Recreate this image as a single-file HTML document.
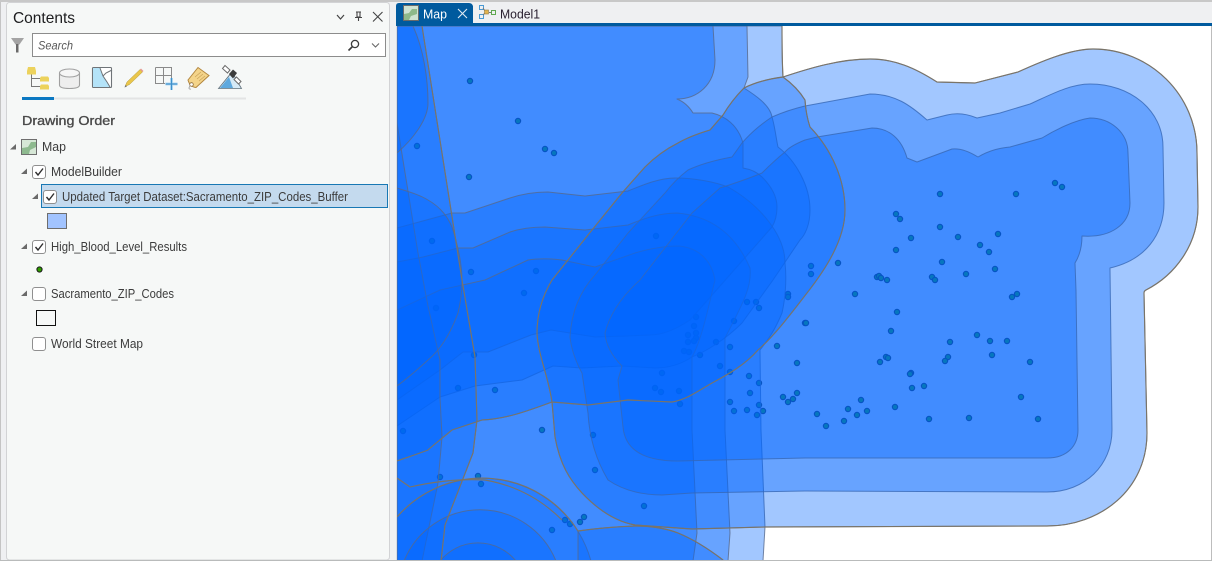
<!DOCTYPE html>
<html><head><meta charset="utf-8"><title>Contents</title>
<style>
html,body{margin:0;padding:0;background:#fff;overflow:hidden;width:1212px;height:561px}
svg{display:block;position:absolute;left:0;top:0}
text{font-family:"Liberation Sans",sans-serif}
#dots circle{r:2.7px}
</style></head><body>
<svg width="1212" height="561" viewBox="0 0 1212 561" xmlns="http://www.w3.org/2000/svg">
<defs><clipPath id="mapc"><rect x="397" y="26" width="814" height="534"/></clipPath></defs>
<rect width="1212" height="561" fill="#eff0f2"/>
<rect x="0" y="0" width="1" height="561" fill="#c4c4c4"/>
<rect width="1212" height="2" fill="#c8c8c8"/>
<rect x="6.500" y="2.500" width="383" height="557.500" rx="3" fill="#f6f8f7" stroke="#d2d3d5"/>

<!-- map -->
<rect x="397" y="26" width="814" height="534" fill="#fff"/>
<g clip-path="url(#mapc)">
<g fill="#1aa800" stroke="#1a1a1a" stroke-width="1" id="dots">
<circle cx="470" cy="81" r="2.7"/><circle cx="518" cy="121" r="2.7"/><circle cx="545" cy="149" r="2.7"/><circle cx="554" cy="153" r="2.7"/><circle cx="417" cy="146" r="2.7"/><circle cx="469" cy="177" r="2.7"/><circle cx="432" cy="241" r="2.7"/><circle cx="471" cy="272" r="2.7"/><circle cx="536" cy="271" r="2.7"/><circle cx="656" cy="236" r="2.7"/>
<circle cx="524" cy="293" r="2.7"/><circle cx="436" cy="308" r="2.7"/><circle cx="474" cy="355" r="2.7"/><circle cx="458" cy="388" r="2.7"/><circle cx="495" cy="390" r="2.7"/><circle cx="403" cy="431" r="2.7"/><circle cx="542" cy="430" r="2.7"/><circle cx="593" cy="435" r="2.7"/><circle cx="595" cy="470" r="2.7"/><circle cx="644" cy="506" r="2.7"/><circle cx="440" cy="477" r="2.7"/><circle cx="478" cy="476" r="2.7"/><circle cx="481" cy="484" r="2.7"/><circle cx="552" cy="530" r="2.7"/><circle cx="565" cy="520" r="2.7"/><circle cx="570" cy="524" r="2.7"/><circle cx="580" cy="522" r="2.7"/><circle cx="584" cy="517" r="2.7"/>
<circle cx="788" cy="294" r="2.7"/><circle cx="788" cy="297" r="2.7"/><circle cx="747" cy="302" r="2.7"/><circle cx="756" cy="302" r="2.7"/><circle cx="759" cy="308" r="2.7"/><circle cx="734" cy="321" r="2.7"/><circle cx="696" cy="317" r="2.7"/><circle cx="694" cy="326" r="2.7"/><circle cx="696" cy="333" r="2.7"/><circle cx="688" cy="335" r="2.7"/><circle cx="696" cy="338" r="2.7"/><circle cx="694" cy="341" r="2.7"/><circle cx="688" cy="342" r="2.7"/><circle cx="716" cy="342" r="2.7"/><circle cx="730" cy="347" r="2.7"/><circle cx="684" cy="351" r="2.7"/><circle cx="689" cy="352" r="2.7"/><circle cx="700" cy="355" r="2.7"/><circle cx="777" cy="346" r="2.7"/><circle cx="797" cy="363" r="2.7"/><circle cx="720" cy="366" r="2.7"/><circle cx="730" cy="372" r="2.7"/><circle cx="662" cy="373" r="2.7"/><circle cx="749" cy="376" r="2.7"/><circle cx="759" cy="383" r="2.7"/><circle cx="655" cy="388" r="2.7"/><circle cx="661" cy="392" r="2.7"/><circle cx="679" cy="391" r="2.7"/><circle cx="750" cy="393" r="2.7"/><circle cx="680" cy="404" r="2.7"/><circle cx="730" cy="402" r="2.7"/><circle cx="734" cy="411" r="2.7"/><circle cx="747" cy="410" r="2.7"/><circle cx="759" cy="405" r="2.7"/><circle cx="757" cy="415" r="2.7"/><circle cx="763" cy="411" r="2.7"/><circle cx="783" cy="397" r="2.7"/><circle cx="788" cy="402" r="2.7"/><circle cx="793" cy="399" r="2.7"/><circle cx="797" cy="393" r="2.7"/><circle cx="805" cy="323" r="2.7"/>
<circle cx="940" cy="194" r="2.7"/><circle cx="1016" cy="194" r="2.7"/><circle cx="1055" cy="183" r="2.7"/><circle cx="1062" cy="187" r="2.7"/><circle cx="896" cy="214" r="2.7"/><circle cx="900" cy="219" r="2.7"/><circle cx="940" cy="227" r="2.7"/><circle cx="958" cy="237" r="2.7"/><circle cx="998" cy="234" r="2.7"/><circle cx="911" cy="238" r="2.7"/><circle cx="980" cy="245" r="2.7"/><circle cx="989" cy="252" r="2.7"/><circle cx="896" cy="250" r="2.7"/><circle cx="942" cy="262" r="2.7"/><circle cx="995" cy="269" r="2.7"/><circle cx="966" cy="274" r="2.7"/><circle cx="838" cy="263" r="2.7"/><circle cx="811" cy="266" r="2.7"/><circle cx="811" cy="274" r="2.7"/><circle cx="877" cy="277" r="2.7"/><circle cx="879" cy="276" r="2.7"/><circle cx="881" cy="278" r="2.7"/><circle cx="887" cy="280" r="2.7"/><circle cx="932" cy="277" r="2.7"/><circle cx="935" cy="280" r="2.7"/>
<circle cx="855" cy="294" r="2.7"/><circle cx="1017" cy="294" r="2.7"/><circle cx="1012" cy="297" r="2.7"/><circle cx="897" cy="312" r="2.7"/><circle cx="806" cy="323" r="2.7"/><circle cx="891" cy="331" r="2.7"/><circle cx="977" cy="335" r="2.7"/><circle cx="990" cy="341" r="2.7"/><circle cx="1007" cy="341" r="2.7"/><circle cx="950" cy="342" r="2.7"/><circle cx="992" cy="355" r="2.7"/><circle cx="948" cy="357" r="2.7"/><circle cx="945" cy="361" r="2.7"/><circle cx="886" cy="357" r="2.7"/><circle cx="888" cy="358" r="2.7"/><circle cx="880" cy="362" r="2.7"/><circle cx="1030" cy="362" r="2.7"/><circle cx="911" cy="373" r="2.7"/><circle cx="910" cy="374" r="2.7"/><circle cx="924" cy="386" r="2.7"/><circle cx="912" cy="388" r="2.7"/><circle cx="1021" cy="397" r="2.7"/><circle cx="861" cy="400" r="2.7"/><circle cx="848" cy="409" r="2.7"/><circle cx="867" cy="411" r="2.7"/><circle cx="895" cy="407" r="2.7"/><circle cx="817" cy="414" r="2.7"/><circle cx="857" cy="415" r="2.7"/><circle cx="844" cy="421" r="2.7"/><circle cx="826" cy="426" r="2.7"/><circle cx="929" cy="419" r="2.7"/><circle cx="969" cy="418" r="2.7"/><circle cx="1038" cy="419" r="2.7"/>
</g>
<g fill="#0066ff" fill-opacity=".365" stroke-linejoin="round">
<g stroke="#56698c" stroke-width="1" stroke-opacity=".8">
<!-- North zip -->
<path d="M397 26H782L782 26Q782 60 783 77Q797 87 805 100Q806 115 810 127C832 150 845 180 845 210C845 240 825 270 807 293C790 315 775 335 758 350C745 365 727 375 712 383C695 393 685 400 672 402L628 400L588 405L552 402C525 412 505 419 482 420L452 430C440 440 430 448 428 450C415 455 405 458 397 461Z"/>
<path d="M397 26H747L748 77L744 88C755 95 770 105 772 117C775 127 776 138 778 147C795 160 810 185 810 210C810 225 805 235 800 240L773 280L742 323C725 340 705 352 692 357C680 365 668 368 655 368L622 366L582 368L553 366L522 380L475 386L440 397L397 426Z"/>
<path d="M397 26H713L715 60C715 85 697 99 677 99Q687 103 693 113H712C725 116 738 125 743 143V168C755 170 760 175 762 177C772 187 777 197 777 207C777 215 775 222 772 227L728 277L690 320C675 330 662 335 650 335L628 336L595 337L551 330L531 335L488 352H463L440 370L397 400Z"/>
<!-- South zip -->
<path d="M397 228L452 213H465L510 198C525 193 540 192 548 192L585 196L628 191C645 184 660 178 675 178C695 178 715 182 728 187C760 205 785 235 785 263C787 280 785 300 782 313C775 330 768 340 760 350L761 430L765 527L763 561H397Z"/>
<path d="M397 262L423 257L458 248H473L510 232C525 227 540 227 545 227L585 230L628 225C645 218 660 213 677 213C710 216 735 233 750 268C752 285 745 300 725 338L725 430L730 533L728 561H397Z"/>
<path d="M397 310L440 290L485 280L528 260C540 258 555 259 562 260L595 267L635 253C655 247 670 246 679 246C700 248 712 262 715 280C710 300 702 340 692 357L692 430L697 533L693 561H397Z"/>
<!-- West zip -->
<path d="M397 26H422L462 280L475 357L477 420L473 453L445 525L441 561H397Z"/>
<path d="M397 123L418 253L428 306L440 360V397L442 437L438 483L422 561H397Z"/>
<path d="M397 26H413C424 50 428 80 428 103C428 120 412 140 397 153Z"/>
<path d="M397 188C410 192 420 195 428 200C442 208 448 218 452 227C458 245 462 265 462 280C462 295 460 305 458 313C450 335 440 350 428 360C415 372 405 380 397 386Z"/>
<!-- South-west circles -->
<path d="M397 517A113 113 0 0 1 591 561H397Z"/>
<path d="M404 561A82 82 0 0 1 556 561Z"/>
<path d="M440 561A49 49 0 0 1 516 561Z"/>
<path d="M578 531Q606 527 635 526C650 526 665 528 678 533C695 540 710 550 723 560V561H578Z"/>
<!-- East zip mid + inner -->
<path d="M805 106Q788 110 772 117Q755 128 742 143L732 157Q705 162 688 170Q675 180 665 193L628 233L595 275Q572 300 570 337Q572 355 582 373L588 413Q590 450 608 480Q630 495 662 495L692 493L805 491L1047 492C1085 492 1112 465 1112 430L1110 268C1145 260 1164 235 1164 203L1163 147C1163 110 1130 84 1090 84C1070 84 1050 95 1030 104L1000 113L977 118C965 113 955 113 947 115L927 120C910 105 895 94 870 94L805 106Z"/>
<path d="M805 140Q790 146 785 152Q775 160 762 173Q745 180 720 188L692 213L640 280Q612 305 605 333Q606 350 622 366L618 380L623 427Q626 461 678 461L805 458L1047 458C1068 458 1078 445 1078 430L1076 290L1075 263C1080 255 1082 245 1082 236C1110 238 1130 225 1130 203L1128 153C1128 132 1110 118 1090 118C1075 120 1055 130 1042 138L1010 147C1000 148 990 150 978 157C970 152 960 148 952 149L917 162L907 158C902 140 890 128 872 128L817 137L805 140Z"/>
<!-- East zip outer -->
<path d="M783 77Q760 80 744 88Q732 100 723 115L710 130Q690 136 678 143Q660 152 645 167L622 193L592 230L552 280Q537 305 537 333C538 355 548 375 552 402L555 437C560 465 570 480 582 493C600 512 618 522 635 525L692 529L765 527L1047 526C1100 526 1147 490 1147 433L1144 293Q1144 291 1146 290C1175 275 1198 245 1198 207L1197 153C1197 95 1150 49 1093 49C1070 49 1040 62 1018 72L975 83L937 82C915 68 895 59 870 59C840 59 810 68 783 77Z"/>
</g>
</g>
<!-- strong grey-brown outlines on top -->
<g fill="none" stroke="#7a7468" stroke-width="1.150" stroke-linejoin="round">
<path d="M782 26Q782 60 783 77Q797 87 805 100Q806 115 810 127C832 150 845 180 845 210C845 240 825 270 807 293C790 315 775 335 758 350C745 365 727 375 712 383C695 393 685 400 672 402L628 400L588 405L552 402C525 412 505 419 482 420L452 430C440 440 430 448 428 450C415 455 405 458 397 461"/>
<path d="M422 26L462 280L475 357L477 420L473 453L445 525L441 561"/>
<path d="M397 517A113 113 0 0 1 578 531"/>
<path d="M397 478L410 487Q450 478 485 480Q530 488 562 520"/>
<path d="M578 531Q606 527 635 526C650 526 665 528 678 533C695 540 710 550 723 560"/>
<path d="M783 77Q760 80 744 88Q732 100 723 115L710 130Q690 136 678 143Q660 152 645 167L622 193L592 230L552 280Q537 305 537 333C538 355 548 375 552 402L555 437C560 465 570 480 582 493C600 512 618 522 635 525L692 529L765 527L1047 526C1100 526 1147 490 1147 433L1144 293Q1144 291 1146 290C1175 275 1198 245 1198 207L1197 153C1197 95 1150 49 1093 49C1070 49 1040 62 1018 72L975 83L937 82C915 68 895 59 870 59C840 59 810 68 783 77"/>
</g>
</g>
<rect x="396" y="26" width="1" height="535" fill="#dadbdd"/>
<rect x="1211" y="26" width="1" height="535" fill="#bdbdbd"/>
<rect y="560" width="1212" height="1" fill="#b9bbbb"/>

<!-- tab strip -->
<rect x="396" y="23" width="816" height="3" fill="#005a9e"/>
<path d="M396 24V6Q396 3 399 3H469Q472 3 473 6V24Z" fill="#005a9e"/>
<rect x="403.500" y="5.500" width="15" height="15" fill="#cfe3d2" stroke="#6a6a6a"/>
<path d="M404 20V14L409 13L412 9H417V14L411 16L409 20Z" fill="#8eb98a"/>
<text x="423" y="18.500" font-size="13" fill="#ffffff" textLength="24" lengthAdjust="spacingAndGlyphs">Map</text>
<path d="M458 9L467 18M467 9L458 18" stroke="#dfeaf4" stroke-width="1.100" fill="none"/>
<g fill="none" stroke-width="1">
<rect x="479.500" y="5.500" width="4" height="4" stroke="#4a9ad4"/>
<rect x="479.500" y="14.500" width="4" height="4" stroke="#4a9ad4"/>
<rect x="491.500" y="10.500" width="4" height="4" stroke="#5fa84f"/>
<path d="M483 8L485 11M483 15L485 13M489 12.500H491" stroke="#777"/>
</g>
<rect x="484.500" y="10" width="4" height="4" fill="#e3b34e" stroke="#8f7a4a" stroke-width=".6"/>
<text x="500" y="18.500" font-size="13" fill="#2a2030" textLength="40" lengthAdjust="spacingAndGlyphs">Model1</text>

<!-- header -->
<text x="13" y="23" font-size="16" fill="#1d1d1f" textLength="62" lengthAdjust="spacingAndGlyphs">Contents</text>
<path d="M337 15L340.500 19L344 15" fill="none" stroke="#444" stroke-width="1.200"/>
<path d="M356 12H361M357 12V17H360V12M355 17.500H362M358.500 18V21" fill="none" stroke="#444" stroke-width="1.100"/>
<path d="M373 12L382.500 21.500M382.500 12L373 21.500" fill="none" stroke="#444" stroke-width="1.100"/>
<!-- filter -->
<path d="M11 38H24L19.500 44.500H15.500Z" fill="#a4a4a4"/>
<path d="M16 44V52.500H18.500V44Z" fill="#6a6a6a"/>
<!-- search -->
<rect x="32.500" y="33.500" width="353" height="23" fill="#fff" stroke="#8c8c8c"/>
<text x="38" y="49.500" font-size="12" font-style="italic" fill="#595959" textLength="35" lengthAdjust="spacingAndGlyphs">Search</text>
<circle cx="355" cy="44" r="3.600" fill="none" stroke="#3c3c3c" stroke-width="1.300"/>
<path d="M352.500 46.500L348.500 50.500" stroke="#3c3c3c" stroke-width="1.600"/>
<path d="M372 43.500L375.500 47L379 43.500" fill="none" stroke="#666" stroke-width="1.100"/>

<!-- toolbar icons -->
<!-- tree -->
<path d="M31.500 74V86.500H41M31.500 78.500H41" fill="none" stroke="#777" stroke-width="1"/>
<path d="M27 71L28 67H35L36 71V74.500H27Z" fill="#ecd25c"/>
<path d="M40 81V78L41 76.500H48L49 78V81.500H40Z" fill="#ecd25c"/>
<path d="M40 89V86L41 84.500H48L49 86V89.500H40Z" fill="#ecd25c"/>
<!-- database -->
<path d="M59.500 73V85C59.500 87.500 64 88.500 69.500 88.500C75 88.500 79.500 87.500 79.500 85V73" fill="#eeeeee" stroke="#a0a0a0" stroke-width="1.100"/>
<ellipse cx="69.500" cy="73" rx="10" ry="4" fill="#f6f6f6" stroke="#a0a0a0" stroke-width="1.100"/>
<!-- map -->
<rect x="92.500" y="67.500" width="19" height="20" rx="1" fill="#fff" stroke="#6f7478" stroke-width="1.100"/>
<path d="M93 68H100L103 76L107 82L110 87H93Z" fill="#b4e3f8"/>
<path d="M100 68L103 76L107 82L110 87M103 76L106 73L112 70" fill="none" stroke="#6f7478"/>
<!-- pencil -->
<path d="M125 86.500L127 82L140 69.500L142.500 72L129.500 84.500Z" fill="#eac64a" stroke="#b39a3c" stroke-width=".5"/>
<path d="M140 69.500L141 68.500L143.500 71L142.500 72Z" fill="#e89a96"/>
<path d="M124.500 87.500L125.500 85L127 86.500Z" fill="#777"/>
<!-- grid plus -->
<path d="M155.500 67.500H171.500V78M155.500 67.500V83.500H165M155.500 75.500H171.500M163.500 67.500V83.500" fill="none" stroke="#8a8a8a" stroke-width="1"/>
<path d="M171.500 78V90M165.500 84H177.500" stroke="#b7ddf4" stroke-width="3"/>
<path d="M171.500 78V90M165.500 84H177.500" stroke="#3d8fca" stroke-width="1.200"/>
<!-- tag -->
<path d="M188 80L198 67.500L209 75.500L196 87.500Q190 87 188 80Z" fill="#f4d48a" stroke="#b3873f" stroke-width="1"/>
<path d="M195 77L201 72M197 79L203 74M199 81L205 76" stroke="#c9a25a" stroke-width=".7"/>
<circle cx="191.500" cy="84.500" r="1.800" fill="#fff" stroke="#8b6b3c" stroke-width=".8"/>
<path d="M190 86C188.500 88 188.500 89.500 191 89" fill="none" stroke="#999" stroke-width=".8"/>
<!-- satellite -->
<path d="M218.500 88.500L232 72L241.500 88.500Z" fill="#d6eaf6" stroke="#5f6f7a" stroke-width=".8"/>
<path d="M220 88L229 77L233 88Z" fill="#5fa9de"/>
<path d="M225 65.500L230 70L227.500 73L222.500 68.500Z" fill="#fff" stroke="#6a6a6a"/>
<path d="M236.500 77L241 81.500L238.500 84L234 79.500Z" fill="#fff" stroke="#6a6a6a"/>
<path d="M229 74L233 69.500L237 73L233 78.500Z" fill="#3c3c3c"/>

<rect x="22" y="97.500" width="224" height="2" fill="#e3e4e4"/>
<rect x="22" y="97" width="32" height="3" fill="#0b78c2"/>

<!-- tree text -->
<text x="22" y="125" font-size="13" fill="#4a4a4a" stroke="#4a4a4a" stroke-width=".35" textLength="93" lengthAdjust="spacingAndGlyphs">Drawing Order</text>

<g fill="#6a6a6a"><path d="M10 149.500L16 144V149.500Z"/><path d="M21 174L27 168.500V174Z"/><path d="M32 199L38 193.500V199Z"/><path d="M21 249L27 243.500V249Z"/><path d="M21 296L27 290.500V296Z"/></g>

<rect x="21.500" y="139.500" width="15" height="15" fill="#d6e7d6" stroke="#6e6e6e"/>
<path d="M22 154V148L28 147L31 142H36V147L30 150L29 154Z" fill="#8eba8f"/>
<text x="42" y="151" font-size="12.500" fill="#3c3c3c" textLength="24" lengthAdjust="spacingAndGlyphs">Map</text>

<rect x="32.500" y="165.500" width="13" height="13" rx="2.500" fill="#fff" stroke="#8f8f8f"/>
<path d="M35.500 172L38 175L43 168.500" fill="none" stroke="#2e2e2e" stroke-width="1.400"/>
<text x="51" y="176" font-size="12.500" fill="#3c3c3c" textLength="71" lengthAdjust="spacingAndGlyphs">ModelBuilder</text>

<rect x="41.500" y="184.500" width="346" height="23" fill="#c4daee" stroke="#1878b4"/>
<rect x="43.500" y="190.500" width="13" height="13" rx="2.500" fill="#fff" stroke="#8f8f8f"/>
<path d="M46.500 197L49 200L54 193.500" fill="none" stroke="#2e2e2e" stroke-width="1.400"/>
<text x="62" y="201" font-size="12.500" fill="#3c3c3c" textLength="286" lengthAdjust="spacingAndGlyphs">Updated Target Dataset:Sacramento_ZIP_Codes_Buffer</text>

<rect x="47.500" y="213.500" width="19" height="15" fill="#a2c4ff" stroke="#6e6e6e"/>

<rect x="32.500" y="240.500" width="13" height="13" rx="2.500" fill="#fff" stroke="#8f8f8f"/>
<path d="M35.500 247L38 250L43 243.500" fill="none" stroke="#2e2e2e" stroke-width="1.400"/>
<text x="51" y="251" font-size="12.500" fill="#3c3c3c" textLength="136" lengthAdjust="spacingAndGlyphs">High_Blood_Level_Results</text>

<circle cx="39.500" cy="269.500" r="2.600" fill="#2f9c00" stroke="#1a1a1a"/>

<rect x="32.500" y="287.500" width="13" height="13" rx="2.500" fill="#fff" stroke="#8f8f8f"/>
<text x="51" y="298" font-size="12.500" fill="#3c3c3c" textLength="123" lengthAdjust="spacingAndGlyphs">Sacramento_ZIP_Codes</text>

<rect x="36.500" y="310.500" width="19" height="15" fill="none" stroke="#111" stroke-width="1"/>

<rect x="32.500" y="337.500" width="13" height="13" rx="2.500" fill="#fff" stroke="#8f8f8f"/>
<text x="51" y="348" font-size="12.500" fill="#3c3c3c" textLength="92" lengthAdjust="spacingAndGlyphs">World Street Map</text>
</svg>
</body></html>
